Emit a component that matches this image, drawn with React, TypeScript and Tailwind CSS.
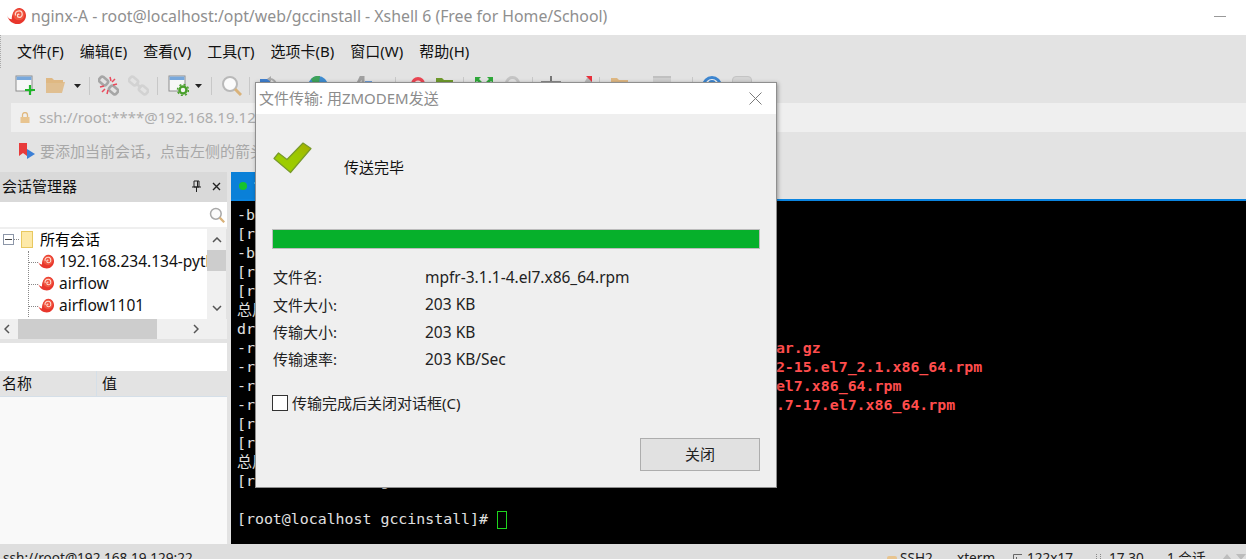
const cjk = "font-['Noto_Sans','Noto_Sans_CJK_SC',sans-serif]";

function Snail({ size = 20 }: { size?: number }) {
    return (
        <svg width={size} height={size} viewBox="0 0 20 20" className="shrink-0">
            <path d="M0 9c1 3 3 4 5 4 0-6 3-12 8-12 4 0 7 4 7 8 0 5-4 9-9 9-5 0-9-3-11-9z" fill="#e8362c" />
            <circle cx="12.500" cy="8" r="6" fill="#f0553f" />
            <path d="M9 9c-1-3 1-5 4-5 2 0 3 2 3 4s-2 3-3 3-2-1-2-2 1-2 2-1" fill="none" stroke="#ffdcd2" strokeWidth="1.300" />
        </svg>
    );
}

function Caret() {
    return <svg width="7" height="4" viewBox="0 0 7 4" className="shrink-0"><path d="M0 0h7L3.500 4z" fill="#222" /></svg>;
}

function Sep() {
    return <div className="w-px h-[18px] bg-[#c8c8c8] shrink-0" />;
}

function NewSession({ gear }: { gear?: boolean }) {
    return (
        <svg width="21" height="21" viewBox="0 0 21 21" className="shrink-0">
            <rect x="1" y="1" width="16" height="15" fill="#f7f7f7" stroke="#8e8e8e" />
            <rect x="1.500" y="1.500" width="15" height="3.500" fill="#78a8dc" />
            {gear ? (
                <g>
                    <circle cx="15" cy="15" r="3.500" fill="#f3f3f3" stroke="#4aa02c" strokeWidth="2.500" />
                    <circle cx="15" cy="15" r="5.500" fill="none" stroke="#4aa02c" strokeWidth="1.500" strokeDasharray="2 2.300" />
                </g>
            ) : (
                <path d="M15 10v10M10 15h10" stroke="#1fb52a" strokeWidth="2.200" />
            )}
        </svg>
    );
}

function Folder({ color = "#dfb883" }: { color?: string }) {
    return (
        <svg width="21" height="17" viewBox="0 0 21 17" className="shrink-0">
            <path d="M1 1h6l2 2h9v3H1z" fill={color} />
            <path d="M1 16V5h19l-3 11z" fill={color} opacity=".85" />
        </svg>
    );
}

function Links({ broken }: { broken?: boolean }) {
    const c = broken ? "#a6a6a6" : "#d2d2d2";
    return (
        <svg width="21" height="21" viewBox="0 0 21 21" className="shrink-0">
            <g fill="none" stroke={c} strokeWidth="2.600">
                <rect x="1" y="3" width="9" height="6" rx="2" transform="rotate(40 5.500 6)" />
                <rect x="11" y="12" width="9" height="6" rx="2" transform="rotate(40 15.500 15)" />
                {!broken && <path d="M8 8l5 5" />}
            </g>
            {broken && <path d="M12 2l1 4M17 4l-3 3M19 9l-4 1M2 12l4-1M4 17l3-3M9 19l1-4" stroke="#ea4a5c" strokeWidth="1.500" />}
        </svg>
    );
}

function Glass({ size = 21, c = "#b9b9b9" }: { size?: number; c?: string }) {
    return (
        <svg width={size} height={size} viewBox="0 0 21 21" className="shrink-0">
            <circle cx="9" cy="9" r="7" fill="#fbfbfb" stroke={c} strokeWidth="2" />
            <path d="M14 14l6 6" stroke="#d9b27a" strokeWidth="3" />
        </svg>
    );
}

function RefreshIcon() {
    return (
        <svg width="20" height="20" viewBox="0 0 20 20" className="shrink-0">
            <rect x="0" y="3" width="10" height="15" fill="#3f7fcf" />
            <path d="M10 3a6 6 0 016 6v5" fill="none" stroke="#a9a9a9" strokeWidth="2" />
            <path d="M7 3l4-3v6z" fill="#a9a9a9" />
        </svg>
    );
}

function GlobeIcon() {
    return (
        <svg width="20" height="20" viewBox="0 0 20 20" className="shrink-0">
            <circle cx="10" cy="10" r="10" fill="#3f8cd0" />
            <path d="M3 3a10 10 0 019-3l-1 8-4 3z" fill="#3fa35a" />
        </svg>
    );
}

function FontIcon() {
    return (
        <svg width="22" height="20" viewBox="0 0 22 20" className="shrink-0">
            <path d="M2 20L11 1h2v19" fill="none" stroke="#a0a0a0" strokeWidth="3" />
            <rect x="15" y="5" width="7" height="15" fill="#6b9bd6" />
        </svg>
    );
}

function TargetIcon() {
    return (
        <svg width="20" height="20" viewBox="0 0 20 20" className="shrink-0">
            <rect x="0" y="7" width="6" height="4" fill="#e8606a" />
            <circle cx="13" cy="8" r="7" fill="#ea4552" />
            <circle cx="13" cy="8" r="3.500" fill="#fbdcdc" />
            <circle cx="13" cy="8" r="1.500" fill="#ea4552" />
        </svg>
    );
}

function ExpandIcon() {
    return (
        <svg width="20" height="20" viewBox="0 0 20 20" className="shrink-0">
            <path d="M1 1h6L5 3l3 3-2 2-3-3-2 2zM19 1h-6l2 2-3 3 2 2 3-3 2 2zM1 19h6l-2-2 3-3-2-2-3 3-2-2zM19 19h-6l2-2-3-3 2-2 3 3 2-2z" fill="#2fa83a" />
        </svg>
    );
}

function KeyboardIcon() {
    return (
        <svg width="20" height="20" viewBox="0 0 20 20" className="shrink-0">
            <rect x="9" y="0" width="2" height="6" fill="#777" />
            <rect x="0" y="5" width="20" height="12" fill="#8a8a8a" />
        </svg>
    );
}

function PencilIcon() {
    return (
        <svg width="11" height="20" viewBox="0 0 11 20" className="shrink-0">
            <path d="M11 0v12H0L6 2z" fill="#b8b8b8" />
            <path d="M5 0h6v6z" fill="#e8303c" />
        </svg>
    );
}

function HelpIcon() {
    return (
        <svg width="20" height="20" viewBox="0 0 20 20" className="shrink-0">
            <circle cx="10" cy="10" r="8.500" fill="#f3f3f3" stroke="#3d86d0" strokeWidth="3" />
            <path d="M7 8a3 3 0 116 0c0 2-3 2-3 4" fill="none" stroke="#3d86d0" strokeWidth="2" />
        </svg>
    );
}

function Toolbar() {
    return (
        <div className="h-[35px] flex items-center pl-[15px] shrink-0 overflow-hidden">
            <NewSession />
            <div className="ml-[9px]"><Folder /></div>
            <div className="ml-[8px]"><Caret /></div>
            <div className="ml-[8px]"><Sep /></div>
            <div className="ml-[8px]"><Links broken /></div>
            <div className="ml-[9px]"><Links /></div>
            <div className="ml-[8px]"><Sep /></div>
            <div className="ml-[10px]"><NewSession gear /></div>
            <div className="ml-[6px]"><Caret /></div>
            <div className="ml-[9px]"><Sep /></div>
            <div className="ml-[9px]"><Glass /></div>
            <div className="ml-[7px]"><Sep /></div>
            <div className="ml-[10px]"><RefreshIcon /></div>
            <div className="ml-[9px]"><Caret /></div>
            <div className="ml-[12px]"><GlobeIcon /></div>
            <div className="ml-[8px]"><Caret /></div>
            <div className="ml-[7px]"><FontIcon /></div>
            <div className="ml-[8px]"><Caret /></div>
            <div className="ml-[8px]"><Sep /></div>
            <div className="ml-[9px]"><TargetIcon /></div>
            <div className="ml-[10px]"><Folder color="#6f9a2c" /></div>
            <div className="ml-[7px]"><Sep /></div>
            <div className="ml-[10px]"><ExpandIcon /></div>
            <div className="ml-[11px] w-[17px] h-[20px] shrink-0"><div className="w-[15px] h-[15px] rounded-full border-[3px] border-[#c4c4c4]" /></div>
            <div className="ml-[10px]"><Sep /></div>
            <div className="ml-[8px]"><KeyboardIcon /></div>
            <div className="ml-[20px]"><PencilIcon /></div>
            <div className="ml-[7px]"><Sep /></div>
            <div className="ml-[10px]"><Folder /></div>
            <div className="ml-[6px]"><Caret /></div>
            <div className="ml-[9px] w-[18px] h-5 bg-[#cfcfcf] border-t-2 border-[#c0c0c0] shrink-0" />
            <div className="ml-[6px]"><Caret /></div>
            <div className="ml-[8px]"><Sep /></div>
            <div className="ml-[9px]"><HelpIcon /></div>
            <div className="ml-[10px] w-5 h-5 rounded bg-[#d4d4d4] border border-[#c4c4c4] shrink-0" />
        </div>
    );
}

function SessionManager() {
    const sessions = ["192.168.234.134-python", "airflow", "airflow1101"];
    return (
        <div className="w-[227px] shrink-0 flex flex-col">
            <div className="h-[30px] bg-[#d9d9d9] flex items-center pl-[2px] pr-[6px] pb-[2px] text-[15px] text-[#111] shrink-0">
                <span className="flex-1">会话管理器</span>
                <svg width="11" height="12" viewBox="0 0 11 12" className="mr-[10px]"><path d="M3 1h5v6H3zM1 7h9M5.500 7v5M6.500 1v6" stroke="#222" fill="none" /></svg>
                <svg width="9" height="9" viewBox="0 0 9 9"><path d="M1 1l7 7M8 1l-7 7" stroke="#222" strokeWidth="1.400" /></svg>
            </div>
            <div className="h-[25px] bg-white flex items-center justify-end pr-[2px] shrink-0">
                <Glass size={16} c="#a8a8a8" />
            </div>
            <div className="h-[2px] bg-[#efefef] shrink-0" />
            <div className="h-[90px] flex shrink-0">
                <div className="w-[207px] bg-white overflow-hidden">
                    <div className="h-[22px] flex items-center pl-[3px] pb-[1px] text-[15px]">
                        <div className="w-[11px] h-[11px] border border-[#8c96a8] flex items-center justify-center shrink-0">
                            <div className="w-[7px] h-px bg-[#444]" />
                        </div>
                        <div className="w-[5px] border-t border-dotted border-[#888]" />
                        <div className="w-[12px] h-[17px] ml-[2px] bg-[#fde9a8] border border-[#e8c860] shrink-0" />
                        <span className="ml-[7px]">所有会话</span>
                    </div>
                    <div className="ml-[28px] border-l border-dotted border-[#888]">
                        {sessions.map((s) => (
                            <div key={s} className="h-[22px] flex items-center text-[15.5px] whitespace-nowrap">
                                <div className="w-[9px] border-t border-dotted border-[#888] shrink-0" />
                                <Snail size={16} />
                                <span className="ml-[5px] text-[#111]">{s}</span>
                            </div>
                        ))}
                    </div>
                </div>
                <div className="w-[19px] bg-[#f0f0f0] flex flex-col items-center">
                    <svg width="10" height="6" viewBox="0 0 10 6" className="mt-[8px]"><path d="M1 5l4-4 4 4" fill="none" stroke="#555" strokeWidth="1.500" /></svg>
                    <div className="w-full h-[21px] mt-[7px] bg-[#cdcdcd]" />
                    <svg width="10" height="6" viewBox="0 0 10 6" className="mt-auto mb-[8px]"><path d="M1 1l4 4 4-4" fill="none" stroke="#555" strokeWidth="1.500" /></svg>
                </div>
            </div>
            <div className="h-[20px] bg-[#f0f0f0] flex items-center shrink-0">
                <svg width="6" height="10" viewBox="0 0 6 10" className="ml-[4px]"><path d="M5 1L1 5l4 4" fill="none" stroke="#555" strokeWidth="1.500" /></svg>
                <div className="w-[139px] h-full ml-[8px] bg-[#cdcdcd]" />
                <svg width="6" height="10" viewBox="0 0 6 10" className="ml-[36px]"><path d="M1 1l4 4-4 4" fill="none" stroke="#555" strokeWidth="1.500" /></svg>
            </div>
            <div className="h-[4px] shrink-0" />
            <div className="h-[28px] bg-white shrink-0" />
            <div className="h-[26px] flex text-[15px] text-[#111] border-b border-[#d5dfe8] shrink-0">
                <div className="w-[97px] pl-[2px] flex items-center border-r border-[#d5dfe8]">名称</div>
                <div className="pl-[5px] flex items-center">值</div>
            </div>
            <div className="flex-1 bg-[#f9f9f9]" />
        </div>
    );
}

const termLines: { text: string; red?: string }[] = [
    { text: "-bash: rz: command not found" },
    { text: "[root@localhost gccinstall]# yum install lrzsz" },
    { text: "-bash: rz: command not found" },
    { text: "[root@localhost gccinstall]# rz" },
    { text: "[root@localhost gccinstall]# ll" },
    { text: "总用量 4" },
    { text: "drwxr-xr-x. 2 root root 4096 Nov 1 10:12 gcc" },
    { text: "-rw-r--r--. 1 root root 0 Nov 1 10:12 gcc".padEnd(60), red: "ar.gz" },
    { text: "-rw-r--r--. 1 root root 0 Nov 1 10:12 gli".padEnd(60), red: "2-15.el7_2.1.x86_64.rpm" },
    { text: "-rw-r--r--. 1 root root 0 Nov 1 10:12 lib".padEnd(60), red: "el7.x86_64.rpm" },
    { text: "-rw-r--r--. 1 root root 0 Nov 1 10:12 lib".padEnd(60), red: ".7-17.el7.x86_64.rpm" },
    { text: "[root@localhost gccinstall]# rz" },
    { text: "[root@localhost gccinstall]# ll" },
    { text: "总用量 4" },
    { text: "[root@localhost gccinstall]#" },
    { text: " " },
];

function Terminal() {
    return (
        <div className="flex-1 flex flex-col min-w-0">
            <div className="h-[27px] flex shrink-0">
                <div className="w-[120px] bg-[#0a80d8] flex items-center pl-[8px] text-white text-[13px] whitespace-nowrap">
                    <div className="w-[8px] h-[8px] rounded-full bg-[#16c42e]" />
                    <span className="ml-[6px]">1 nginx-A</span>
                </div>
            </div>
            <div className="h-[2px] bg-[#0a84e0] shrink-0" />
            <div className="flex-1 bg-black pt-[5px] pl-[6px] font-['DejaVu_Sans_Mono','Noto_Sans_CJK_SC',monospace] text-[14.9px] leading-[19px] text-[#e0e0e0] whitespace-pre overflow-hidden">
                {termLines.map((l, i) => (
                    <div key={i} className="h-[19px]">
                        {l.text}
                        {l.red && <span className="ml-[1px] text-[#ff4d4d] font-bold">{l.red}</span>}
                    </div>
                ))}
                <div className="h-[19px] flex items-center">
                    <span>[root@localhost gccinstall]#</span>
                    <span className="w-[10px] h-[18px] ml-[9px] border border-[#1ed41e]" />
                </div>
            </div>
        </div>
    );
}

function Dialog() {
    const rows = [
        ["文件名:", "mpfr-3.1.1-4.el7.x86_64.rpm", "h-[27px]"],
        ["文件大小:", "203 KB", "h-[28px]"],
        ["传输大小:", "203 KB", "h-[27px]"],
        ["传输速率:", "203 KB/Sec", "h-[27px]"],
    ];
    return (
        <div className="absolute left-[255px] top-[82px] w-[522px] h-[406px] bg-[#efefef] border border-[#8f8f8f] shadow-[1px_1px_4px_rgba(0,0,0,0.35)] flex flex-col">
            <div className="h-[31px] bg-white flex items-center pl-[3px] pr-[14px] shrink-0">
                <span className="flex-1 text-[15px] text-[#8c8c8c]">文件传输: 用ZMODEM发送</span>
                <svg width="13" height="13" viewBox="0 0 13 13"><path d="M0.500 0.500l12 12M12.500 0.500l-12 12" stroke="#7a7a7a" /></svg>
            </div>
            <div className="flex-1 px-[16px] flex flex-col">
                <div className="flex h-[115px] shrink-0">
                    <svg width="39" height="33" viewBox="0 0 39 33" className="mt-[27px] ml-[1px] shrink-0">
                        <defs>
                            <linearGradient id="tick" x1="0" y1="1" x2="1" y2="0">
                                <stop offset="0" stopColor="#9ed200" />
                                <stop offset="0.600" stopColor="#9cc800" />
                                <stop offset="1" stopColor="#a8ac00" />
                            </linearGradient>
                        </defs>
                        <path d="M1 17.500 5.500 12 14 18.500 30 2 38 7.500 17.500 31.500z" fill="url(#tick)" stroke="#789a2a" strokeWidth="1.200" strokeLinejoin="round" />
                    </svg>
                    <span className="ml-[32px] mt-[43px] text-[15px] text-[#111] h-[20px] leading-[20px]">传送完毕</span>
                </div>
                <div className="h-[20px] border border-[#bcbcbc] bg-[#06b02b] shrink-0" />
                <div className="mt-[15px] flex flex-col text-[15px] text-[#222] shrink-0">
                    {rows.map(([k, v, h]) => (
                        <div key={k} className={`${h} flex items-center pl-[1px]`}>
                            <span className="w-[152px]">{k}</span>
                            <span className="text-[15.5px]">{v}</span>
                        </div>
                    ))}
                </div>
                <div className="mt-[19px] h-[22px] flex items-center text-[15px] text-[#222] shrink-0">
                    <div className="w-[16px] h-[16px] bg-white border border-[#333] shrink-0" />
                    <span className="ml-[4px]">传输完成后关闭对话框(C)</span>
                </div>
                <div className="flex justify-end mt-[24px] shrink-0">
                    <button className="w-[120px] h-[33px] bg-[#e1e1e1] border border-[#adadad] text-[15px] text-[#222]">关闭</button>
                </div>
            </div>
        </div>
    );
}

export default function App() {
    return (
        <div className={`relative w-[1246px] h-[559px] overflow-hidden bg-[#e3e3e3] flex flex-col ${cjk}`}>
            {/* Title bar */}
            <div className="h-[35px] bg-white flex items-center pl-[7px] pr-[20px] pb-[2px] shrink-0">
                <Snail size={19} />
                <span className="ml-[5px] flex-1 text-[15.85px] text-[#8f8f8f] whitespace-nowrap">nginx-A - root@localhost:/opt/web/gccinstall - Xshell 6 (Free for Home/School)</span>
                <div className="w-[12px] h-px bg-[#999]" />
            </div>
            {/* Menu */}
            <div className="h-[33px] flex items-center pl-[16px] pb-[1px] gap-[16px] text-[15px] text-[#111] shrink-0 border-l border-dotted border-[#aaa]">
                {["文件(F)", "编辑(E)", "查看(V)", "工具(T)", "选项卡(B)", "窗口(W)", "帮助(H)"].map((m) => (
                    <span key={m}>{m}</span>
                ))}
            </div>
            <Toolbar />
            {/* Address */}
            <div className="h-[29px] ml-[11px] bg-[#efefef] flex items-center pl-[9px] text-[15px] text-[#adadad] shrink-0">
                <svg width="10" height="11" viewBox="0 0 10 11"><path d="M2.500 5V3a2.500 2.500 0 015 0v2" fill="none" stroke="#e0b87f" strokeWidth="1.300" /><rect x="0.500" y="5" width="9" height="6" fill="#e8c48f" /></svg>
                <span className="ml-[9px]">ssh://root:****@192.168.19.129:22</span>
            </div>
            {/* Hint */}
            <div className="h-[40px] flex items-center pl-[19px] pb-[1px] text-[15px] text-[#a8a8a8] shrink-0">
                <svg width="16" height="17" viewBox="0 0 16 17"><path d="M0 0h8v13l-4-3-4 3z" fill="#e83b3b" /><path d="M8 6l8 5-8 5z" fill="#3b7fd6" /></svg>
                <span className="ml-[5px]">要添加当前会话，点击左侧的箭头按钮。</span>
            </div>
            {/* Main */}
            <div className="h-[372px] flex gap-[4px] shrink-0">
                <SessionManager />
                <Terminal />
            </div>
            {/* Status bar */}
            <div className="h-[24px] bg-[#dedede] flex items-center pl-[3px] text-[13.6px] text-[#222] shrink-0 pt-[5px] whitespace-nowrap">
                <span className="w-[884px] shrink-0">ssh://root@192.168.19.129:22</span>
                <svg width="10" height="11" viewBox="0 0 10 11"><rect x="0" y="3" width="10" height="8" rx="2" fill="#e8c48f" /></svg>
                <span className="ml-[3px] w-[57px]">SSH2</span>
                <span className="w-[56px]">xterm</span>
                <span className="w-[14px] flex"><svg width="9" height="11" viewBox="0 0 9 11"><path d="M0.500 11V1.500H9M3.500 11V4" stroke="#666" fill="none" /></svg></span>
                <span className="w-[69px]">122x17</span>
                <span className="w-[13px] flex"><svg width="6" height="11" viewBox="0 0 6 11"><path d="M0.500 1v10M4.500 1v10" stroke="#888" strokeDasharray="1 1" fill="none" /></svg></span>
                <span className="w-[58px]">17,30</span>
                <span className="w-[55px]">1 会话</span>
                <svg width="24" height="11" viewBox="0 0 24 11"><path d="M5 1l5 6H0zM19 7l5-6H14z" fill="#bdbdbd" /></svg>
            </div>
            <Dialog />
        </div>
    );
}
